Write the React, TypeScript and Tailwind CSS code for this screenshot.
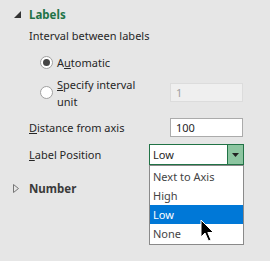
import React from "react";

function Radio({ checked }: { checked?: boolean }) {
  return (
    <span className="w-[13px] h-[13px] rounded-full border border-[#a0a0a0] bg-white flex items-center justify-center shrink-0">
      {checked && <span className="w-[7px] h-[7px] rounded-full bg-[#444]" />}
    </span>
  );
}

export default function App() {
  return (
    <div
      className="w-[270px] h-[261px] bg-[#e6e6e6] text-[#262626] text-[11px] leading-[17px] relative overflow-hidden"
      style={{ fontFamily: '"Noto Sans", "Open Sans", sans-serif' }}
    >
      <div className="pt-[5px] flex flex-col">
        {/* Labels header */}
        <div className="h-[18px] flex items-center">
          <div className="w-[29px] flex justify-center pl-[5px]">
            <svg width="7" height="7" viewBox="0 0 7 7">
              <polygon points="7,0 7,7 0,7" fill="#333" />
            </svg>
          </div>
          <span className="font-bold text-[#217346] text-[11.5px]">Labels</span>
        </div>
        {/* Interval */}
        <div className="mt-[3px] h-[18px] flex items-center pl-[29px]">
          Interval between labels
        </div>
        {/* Automatic */}
        <div className="mt-[9px] h-[18px] flex items-center pl-[40px] gap-[4px]">
          <Radio checked />
          <span>
            A<span className="underline">u</span>tomatic
          </span>
        </div>
        {/* Specify */}
        <div className="mt-[5px] flex items-start pl-[40px] pr-[27px]">
          <div className="flex items-center gap-[4px] pt-[10px]">
            <Radio />
          </div>
          <div className="ml-[4px] flex flex-col leading-[17px]">
            <span>
              <span className="underline">S</span>pecify interval
            </span>
            <span>unit</span>
          </div>
          <div className="ml-auto mt-[7px] w-[73px] h-[19px] bg-[#efefef] border border-[#dcdcdc] text-[#a0a0a0] pl-[5px] flex items-center">
            1
          </div>
        </div>
        {/* Distance */}
        <div className="mt-[8px] h-[19px] flex items-center pl-[29px] pr-[27px]">
          <span>
            <span className="underline">D</span>istance from axis
          </span>
          <div className="ml-auto w-[73px] h-[19px] bg-white border border-[#ababab] pl-[5px] flex items-center">
            100
          </div>
        </div>
        {/* Label Position */}
        <div className="mt-[7px] h-[21px] flex items-center pl-[29px] pr-[26px] relative">
          <span>
            <span className="underline">L</span>abel Position
          </span>
          <div className="ml-auto w-[95px] h-[21px] bg-white border border-[#217346] flex items-stretch">
            <div className="flex-1 pl-[3px] flex items-center">Low</div>
            <div className="w-[16px] bg-[#8cc5a0] border-l border-[#217346] flex items-center justify-center">
              <svg width="7" height="4" viewBox="0 0 7 4">
                <polygon points="0,0 7,0 3.5,4" fill="#222" />
              </svg>
            </div>
          </div>
          {/* Dropdown list */}
          <div className="absolute left-[149px] top-[21px] w-[95px] bg-white border border-[#8a8a8a] flex flex-col py-[1px] z-10 text-[#444]">
            <div className="h-[19px] pl-[3px] flex items-center">Next to Axis</div>
            <div className="h-[19px] pl-[3px] flex items-center">High</div>
            <div className="h-[19px] pl-[3px] flex items-center bg-[#0078d7] text-white">Low</div>
            <div className="h-[19px] pl-[3px] flex items-center">None</div>
          </div>
        </div>
        {/* Number */}
        <div className="mt-[14px] h-[18px] flex items-center">
          <div className="w-[29px] flex justify-center pl-[3px]">
            <svg width="6" height="9" viewBox="0 0 6 9">
              <polygon points="0.5,0.5 5.5,4.5 0.5,8.5" fill="none" stroke="#777" strokeWidth="1" />
            </svg>
          </div>
          <span className="font-bold text-[#3a3a3a] text-[11.5px]">Number</span>
        </div>
      </div>
      {/* Cursor */}
      <svg
        className="absolute left-[200px] top-[219px] z-20"
        width="15"
        height="24"
        viewBox="0 0 15 24"
      >
        <path
          d="M1 1 L1 18 L5 14 L8.5 22 L11 21 L7.8 13.5 L13.5 13.5 Z"
          fill="#000"
          stroke="#fff"
          strokeWidth="1"
          strokeLinejoin="round"
        />
      </svg>
    </div>
  );
}
